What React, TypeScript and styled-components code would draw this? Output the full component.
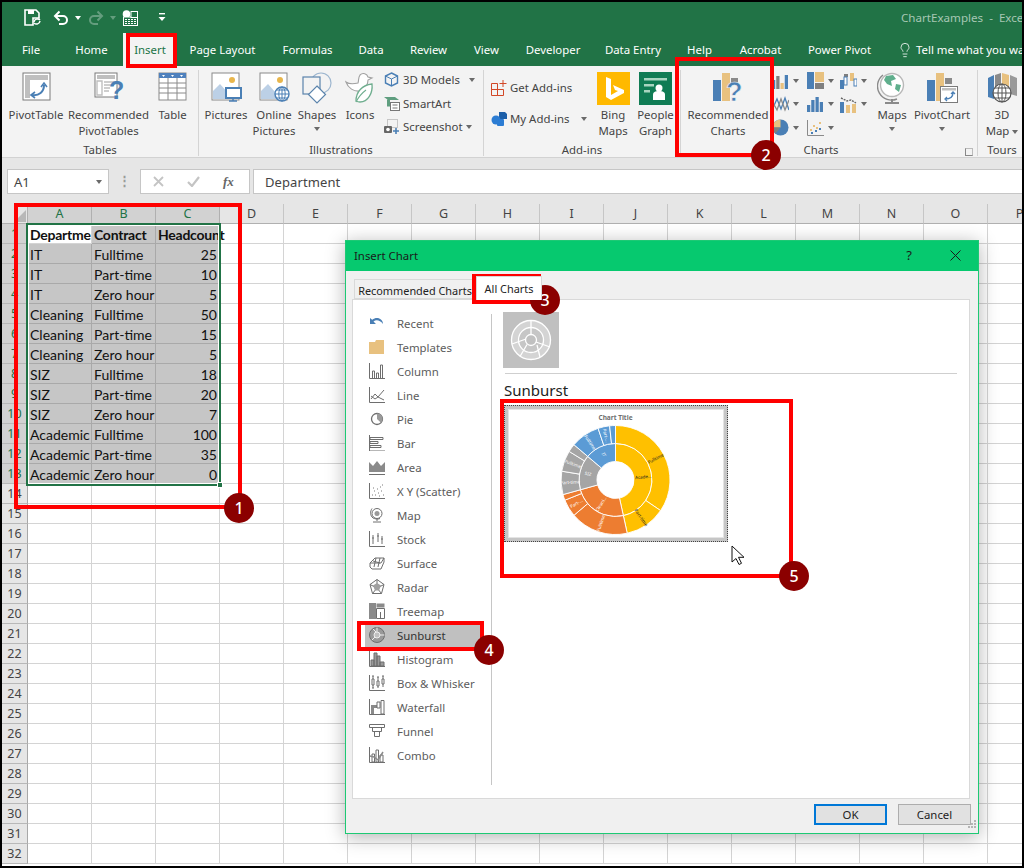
import { Fragment, ReactNode } from 'react';
import styled, { createGlobalStyle } from 'styled-components';
import { Lightbulb } from 'lucide-react';

const UI_FONT = '"Noto Sans", "Open Sans", sans-serif';
const BLUE = '#4a7fb5';
const TAN = '#e8c17f';

const GlobalStyle = createGlobalStyle`
  html, body { margin: 0; padding: 0; background: #000; }
  * { box-sizing: border-box; }
`;

const Screen = styled.div`
  position: relative;
  width: 1024px;
  height: 868px;
  padding: 2px;
  background: #000;
  font-family: ${UI_FONT};
  font-size: 11.4px;
  color: #444;
  overflow: hidden;
`;

const Window = styled.div`
  width: 1020px;
  height: 864px;
  background: #fff;
  overflow: hidden;
  display: flex;
  flex-direction: column;
`;

const TitleBar = styled.div`
  flex: 0 0 31px;
  background: #217346;
  display: flex;
  align-items: center;
  padding-left: 22px;
`;

const QuickIcon = styled.div<{ $w: number }>`
  width: ${p => p.$w}px;
  height: 20px;
  display: flex;
  align-items: center;
`;

const DocTitle = styled.div`
  margin-left: auto;
  white-space: pre;
  font-size: 11.6px;
  color: #a6c7b4;
  width: 121px;
  overflow: hidden;
`;

const TabRow = styled.div`
  flex: 0 0 33px;
  background: #217346;
  display: flex;
  align-items: stretch;
  padding-left: 2px;
`;

const Tab = styled.div<{ $w: number; $active?: boolean }>`
  flex: 0 0 ${p => p.$w}px;
  display: flex;
  align-items: center;
  justify-content: center;
  color: ${p => (p.$active ? '#217346' : '#fff')};
  background: ${p => (p.$active ? '#f3f3f3' : 'transparent')};
  box-shadow: ${p => (p.$active ? '-2px 0 0 #f3f3f3' : 'none')};
  white-space: nowrap;
`;

const TellMe = styled.div`
  display: flex;
  align-items: center;
  gap: 3px;
  color: #fff;
  white-space: nowrap;
  padding-left: 13px;
`;

const Ribbon = styled.div`
  flex: 0 0 92px;
  background: #f3f3f3;
  border-bottom: 1px solid #d2d2d2;
  display: flex;
  padding-top: 4px;
`;

const Group = styled.div<{ $w: number }>`
  flex: 0 0 ${p => p.$w}px;
  height: 86px;
  border-right: 1px solid #d4d4d4;
  display: flex;
  flex-direction: column;
`;

const GroupBody = styled.div`
  height: 73px;
  display: flex;
`;

const GroupLabel = styled.div<{ $pr?: number }>`
  height: 13px;
  line-height: 13px;
  text-align: center;
  padding-right: ${p => p.$pr ?? 0}px;
  position: relative;
  color: #444;
`;

const Launcher = styled.div`
  position: absolute;
  right: 4px;
  top: 5px;
  width: 8px;
  height: 8px;
  border-left: 1px solid #888;
  border-bottom: 1px solid #888;
  border-top: 1px solid #bbb;
  border-right: 1px solid #bbb;
`;

const BigButton = styled.div<{ $w: number }>`
  flex: 0 0 ${p => p.$w}px;
  min-width: 0;
  display: flex;
  flex-direction: column;
  align-items: center;
`;

const BigIcon = styled.div`
  height: 37px;
  display: flex;
  align-items: flex-start;
  padding-top: 2px;
`;

const BigLabel = styled.div`
  line-height: 16px;
  text-align: center;
  white-space: pre;
  color: #444;
`;

const Caret = styled.span<{ $dim?: boolean; $light?: boolean }>`
  display: inline-block;
  width: 0;
  height: 0;
  vertical-align: middle;
  border-left: 3.5px solid transparent;
  border-right: 3.5px solid transparent;
  border-top: 4px solid ${p => (p.$light ? '#fff' : '#6a6a6a')};
  opacity: ${p => (p.$dim ? 0.3 : 1)};
`;

const BigCaret = styled.div`
  line-height: 10px;
  height: 12px;
`;

const SmallColumn = styled.div<{ $w: number; $top: number; $left: number }>`
  flex: 0 0 ${p => p.$w}px;
  min-width: 0;
  margin-top: ${p => p.$top}px;
  padding-left: ${p => p.$left}px;
  display: flex;
  flex-direction: column;
`;

const SmallRow = styled.div<{ $h: number }>`
  height: ${p => p.$h}px;
  display: flex;
  align-items: center;
  white-space: nowrap;
  color: #444;
`;

const SmallIcon = styled.div`
  width: 19px;
  height: 18px;
  display: flex;
  align-items: center;
`;

const ChartGrid = styled.div`
  flex: 0 0 100px;
  margin: -1px 0 0 -3px;
  display: grid;
  grid-template-columns: 35px 33px 32px;
  grid-auto-rows: 23.5px;
  align-items: center;
`;

const ChartPick = styled.div`
  display: flex;
  align-items: center;
  gap: 4px;
`;

const FormulaRow = styled.div`
  flex: 0 0 46px;
  background: #e6e6e6;
  display: flex;
  align-items: flex-start;
  padding-top: 11px;
  padding-left: 5px;
`;

const NameBox = styled.div`
  width: 102px;
  height: 25px;
  background: #fff;
  border: 1px solid #c6c6c6;
  display: flex;
  align-items: center;
  justify-content: space-between;
  padding: 0 6px;
  font-size: 13px;
`;

const Dots = styled.div`
  width: 31px;
  text-align: center;
  color: #9a9a9a;
  line-height: 22px;
  font-size: 13px;
  font-weight: 700;
`;

const FxBox = styled.div`
  width: 110px;
  height: 25px;
  background: #fff;
  border: 1px solid #c6c6c6;
  display: flex;
  align-items: center;
  padding-left: 12px;
  gap: 23px;
`;

const FxMark = styled.span`
  font-family: "Liberation Serif", serif;
  font-style: italic;
  font-weight: 700;
  font-size: 13px;
  color: #666;
`;

const FormulaInput = styled.div`
  flex: 1;
  height: 25px;
  margin-left: 3px;
  background: #fff;
  border: 1px solid #c6c6c6;
  border-right: 0;
  display: flex;
  align-items: center;
  padding-left: 11px;
  font-size: 13px;
  letter-spacing: 0.1px;
`;

const Sheet = styled.div`
  display: grid;
  grid-template-columns: 26px repeat(16, 64px);
  grid-auto-rows: 20px;
  background: #fff;
`;

const Corner = styled.div`
  background: #e6e6e6;
  border-right: 1px solid #b0b0b0;
  border-bottom: 1px solid #b0b0b0;
  position: relative;
  overflow: hidden;
  &::after {
    content: '';
    position: absolute;
    right: 1px;
    bottom: 1px;
    border-left: 12px solid transparent;
    border-bottom: 12px solid #b8b8b8;
  }
`;

const ColHead = styled.div<{ $on?: boolean }>`
  background: ${p => (p.$on ? '#d2d2d2' : '#e6e6e6')};
  color: ${p => (p.$on ? '#217346' : '#444')};
  border-right: 1px solid ${p => (p.$on ? '#b0b0b0' : '#c6c6c6')};
  border-bottom: 1px solid #b0b0b0;
  text-align: center;
  line-height: 19px;
  font-size: 12.5px;
`;

const RowHead = styled.div<{ $on?: boolean }>`
  background: ${p => (p.$on ? '#d2d2d2' : '#e6e6e6')};
  color: ${p => (p.$on ? '#217346' : '#444')};
  border-right: 1px solid #a8a8a8;
  border-bottom: 1px solid #b8b8b8;
  text-align: center;
  line-height: 20px;
  font-size: 12.5px;
`;

const Cell = styled.div<{ $on?: boolean; $right?: boolean; $bold?: boolean; $spill?: boolean }>`
  background: ${p => (p.$on ? '#c6c6c6' : 'transparent')};
  border-right: 1px solid ${p => (p.$on ? '#a9a9a9' : '#d4d4d4')};
  border-bottom: 1px solid ${p => (p.$on ? '#a9a9a9' : '#d4d4d4')};
  font-family: Lato, "Liberation Sans", sans-serif;
  font-size: 14px;
  font-weight: ${p => (p.$bold ? 700 : 400)};
  letter-spacing: ${p => (p.$bold ? '-0.25px' : '0')};
  color: #111;
  line-height: 21px;
  padding: 0 2px;
  white-space: nowrap;
  text-align: ${p => (p.$right ? 'right' : 'left')};
  overflow: ${p => (p.$spill ? 'visible' : 'hidden')};
`;

const SelectionBox = styled.div`
  position: absolute;
  left: 26px;
  top: 223px;
  width: 195px;
  height: 263px;
  border: 2px solid #217346;
  box-shadow: inset 0 0 0 1px #fff;
`;

const FillHandle = styled.div`
  position: absolute;
  left: 217px;
  top: 482px;
  width: 6px;
  height: 6px;
  background: #217346;
  border: 1px solid #fff;
`;

const Dialog = styled.div`
  position: absolute;
  left: 345px;
  top: 240px;
  width: 634px;
  height: 594px;
  background: #f0f0f0;
  border: 1px solid #1dc974;
  box-shadow: 0 3px 18px rgba(0, 0, 0, 0.3);
  display: flex;
  flex-direction: column;
`;

const DialogTitle = styled.div`
  flex: 0 0 30px;
  background: #06c96f;
  display: flex;
  align-items: center;
  padding: 0 0 2px 8px;
  color: #1a1a1a;
`;

const DialogTitleText = styled.span`
  flex: 1;
`;

const TitleGlyph = styled.span`
  width: 46px;
  text-align: center;
  font-size: 13px;
  display: flex;
  justify-content: center;
`;

const DialogTabs = styled.div`
  flex: 0 0 28px;
  display: flex;
  align-items: flex-end;
  padding-left: 8px;
`;

const DialogTab = styled.div<{ $active?: boolean; $w: number }>`
  width: ${p => p.$w}px;
  height: ${p => (p.$active ? 24 : 20)}px;
  margin-bottom: ${p => (p.$active ? -1 : 0)}px;
  background: ${p => (p.$active ? '#fff' : '#f0f0f0')};
  border: 1px solid #d9d9d9;
  border-bottom: ${p => (p.$active ? '0' : '1px solid #d9d9d9')};
  z-index: ${p => (p.$active ? 1 : 0)};
  text-align: center;
  line-height: ${p => (p.$active ? 24 : 21)}px;
  color: #222;
  font-size: 10.9px;
  white-space: nowrap;
  overflow: hidden;
`;

const Panel = styled.div`
  flex: 0 0 500px;
  margin: 0 8px 0 6px;
  background: #fff;
  border: 1px solid #d9d9d9;
  display: flex;
`;

const TypeList = styled.div`
  flex: 0 0 139px;
  margin-top: 14px;
  height: 471px;
  border-right: 1px solid #c6c6c6;
  padding-left: 12px;
`;

const TypeStack = styled.div`
  margin-top: -3px;
`;

const TypeItem = styled.div<{ $on?: boolean }>`
  width: 115px;
  height: 24px;
  padding-left: 4px;
  display: flex;
  align-items: center;
  gap: 12px;
  background: ${p => (p.$on ? '#c0c0c0' : 'transparent')};
  color: ${p => (p.$on ? '#333' : '#5c5c5c')};
  white-space: nowrap;
`;

const Gallery = styled.div`
  flex: 1;
  padding: 12px 0 0 11px;
`;

const Thumb = styled.div`
  width: 56px;
  height: 56px;
  background: #c0c0c0;
`;

const Rule = styled.div`
  width: 452px;
  height: 1px;
  margin: 5px 0 0 2px;
  background: #cfcfcf;
`;

const GalleryTitle = styled.div`
  height: 31px;
  line-height: 33px;
  margin-left: 1px;
  font-size: 15px;
  color: #222;
`;

const Preview = styled.div`
  width: 224px;
  height: 137px;
  margin-left: 1px;
  border: 1px dotted #444;
  background: #c6c6c6;
  padding: 3px;
`;

const PreviewPaper = styled.div`
  width: 100%;
  height: 100%;
  background: #fff;
  border: 1px solid #e4e4e4;
  overflow: hidden;
`;

const DialogFooter = styled.div`
  flex: 1;
  display: flex;
  justify-content: flex-end;
  gap: 11px;
  padding: 5px 7px 0 0;
  position: relative;
`;

const DialogButton = styled.div<{ $primary?: boolean }>`
  width: 73px;
  height: 21px;
  background: #e1e1e1;
  border: ${p => (p.$primary ? '2px solid #0078d7' : '1px solid #adadad')};
  display: flex;
  align-items: center;
  justify-content: center;
  color: #222;
`;

const Grip = styled.div`
  position: absolute;
  right: 1px;
  bottom: 1px;
`;

const RedBox = styled.div<{ $x: number; $y: number; $w: number; $h: number }>`
  position: absolute;
  left: ${p => p.$x}px;
  top: ${p => p.$y}px;
  width: ${p => p.$w}px;
  height: ${p => p.$h}px;
  border: 4px solid #ff0000;
  pointer-events: none;
`;

const Badge = styled.div<{ $x: number; $y: number }>`
  position: absolute;
  left: ${p => p.$x - 15}px;
  top: ${p => p.$y - 15}px;
  width: 30px;
  height: 30px;
  border-radius: 50%;
  background: #8b0000;
  color: #fff;
  display: flex;
  align-items: center;
  justify-content: center;
  font-size: 16px;
  font-weight: 500;
`;

const Pointer = styled.svg`
  position: absolute;
  left: 731px;
  top: 545px;
`;

// ---- ribbon and toolbar drawings ----

const SaveIcon = () => (
  <svg width="18" height="17" viewBox="0 0 18 17" fill="none">
    <path d="M1 1h11l3 3v5H9v7H1z" fill="#217346" stroke="#fff" strokeWidth="1.6" />
    <rect x="4" y="1" width="6" height="4" fill="#fff" />
    <path d="M10 13a3.5 3.5 0 0 1 6-2M16 12a3.5 3.5 0 0 1-6 2" stroke="#fff" strokeWidth="1.5" />
  </svg>
);

const UndoIcon = ({ dim }: { dim?: boolean }) => (
  <svg width="16" height="15" viewBox="0 0 16 15" fill="none" style={dim ? { transform: 'scaleX(-1)', opacity: 0.3 } : undefined}>
    <path d="M3 6h7a4 4 0 0 1 0 8H6" stroke="#fff" strokeWidth="2" />
    <path d="M6.5 1.5 2 6l4.5 4.5" stroke="#fff" strokeWidth="2" />
  </svg>
);

const FormIcon = () => (
  <svg width="17" height="16" viewBox="0 0 17 16" fill="none">
    <circle cx="4.5" cy="4" r="3.8" fill="#fff" />
    <rect x="1.5" y="7" width="14" height="8.5" fill="#217346" stroke="#fff" />
    <rect x="9" y="1.5" width="6.5" height="6" fill="#217346" stroke="#fff" />
    <path d="M3 9.5h11M3 11.5h11M3 13.5h11" stroke="#fff" strokeDasharray="2 1" />
  </svg>
);

const CustomizeIcon = () => (
  <svg width="8" height="9" viewBox="0 0 8 9" fill="#fff">
    <rect x="1" y="0" width="6" height="1.4" />
    <path d="M0.5 4h7L4 8z" />
  </svg>
);

const PivotTableIcon = () => (
  <svg width="29" height="29" viewBox="0 0 29 29" fill="none">
    <rect x="1" y="1" width="27" height="27" fill="#fff" stroke="#7a7a7a" />
    <rect x="3" y="3" width="23" height="5" fill="#bfbfbf" />
    <rect x="3" y="8" width="5" height="18" fill="#bfbfbf" />
    <path d="M10 23c7 1 12-3 12-10" stroke={BLUE} strokeWidth="2" />
    <path d="M19 15l3-4 3 4M13 20l-4 3 4 3" stroke={BLUE} strokeWidth="1.6" />
  </svg>
);

const RecPivotIcon = () => (
  <svg width="30" height="31" viewBox="0 0 30 31" fill="none">
    <rect x="1" y="1" width="22" height="24" fill="#fff" stroke="#7a7a7a" />
    <rect x="3" y="3" width="18" height="4" fill="#bfbfbf" />
    <path d="M3 9h5v14H3zM10 10h10M10 13h10M10 16h6M10 19h5" stroke="#bfbfbf" strokeWidth="1.4" />
    <text x="15" y="27" fontFamily="Liberation Sans, sans-serif" fontSize="25" fontWeight="700" fill={BLUE}>?</text>
  </svg>
);

const TableIcon = () => (
  <svg width="29" height="29" viewBox="0 0 29 29" fill="none">
    <rect x="1" y="1" width="27" height="27" fill="#fff" stroke="#8a8a8a" />
    <rect x="1" y="1" width="27" height="5" fill="#4f81bd" />
    <path d="M1 11h27M1 16h27M1 21h27M10 6v22M19 6v22" stroke="#8a8a8a" />
    <path d="M4 3h3l-1.500 2zM13 3h3l-1.500 2zM22 3h3l-1.500 2z" fill="#fff" />
  </svg>
);

const PictureBase = () => (
  <>
    <rect x="1" y="1" width="27" height="27" fill="#fff" stroke="#8a8a8a" />
    <circle cx="21" cy="8" r="3" fill="#e8b64c" />
    <path d="M2 27V19l7-7 8 9v6z" fill="#bcd0e6" />
  </>
);

const PicturesIcon = () => (
  <svg width="31" height="30" viewBox="0 0 31 30" fill="none">
    <PictureBase />
    <rect x="15" y="16" width="15" height="10" fill="#fff" stroke={BLUE} strokeWidth="2" />
    <path d="M22 26v3M18 29h8" stroke={BLUE} strokeWidth="1.5" />
  </svg>
);

const OnlinePicturesIcon = () => (
  <svg width="31" height="30" viewBox="0 0 31 30" fill="none">
    <PictureBase />
    <circle cx="23" cy="22" r="7" fill="#fff" stroke={BLUE} strokeWidth="1.4" />
    <path d="M16 22h14M23 15v14M18 18h10M18 26h10" stroke={BLUE} />
    <ellipse cx="23" cy="22" rx="3.2" ry="7" stroke={BLUE} />
  </svg>
);

const ShapesIcon = () => (
  <svg width="32" height="32" viewBox="0 0 32 32" fill="none" stroke="#5b84ac" strokeWidth="1.2">
    <circle cx="20" cy="11" r="10" fill="#f3f3f3" stroke="#9db6cf" />
    <rect x="2" y="5" width="17" height="17" fill="#f3f3f3" />
    <path d="M16 14l8.500 8.500L16 31l-8.500-8.500z" fill="#fff" />
  </svg>
);

const IconsIcon = () => (
  <svg width="30" height="32" viewBox="0 0 30 32" fill="none" stroke="#a0a0a0" strokeWidth="1.1">
    <path d="M1 10c4 3 8 2 12 1 1-3 0-5 2-8 3-3 7-1 8 2l4 1-4 2c0 5-3 9-8 11-6 1-12-3-14-9z" fill="#fff" />
    <path d="M11 29c0-9 6-16 16-17 1 9-4 18-12 18-2 0-3-0.500-4-1z" fill="#fff" stroke="#6fae8f" strokeWidth="1.3" />
    <path d="M11 30c3-6 6-9 10-12" stroke="#6fae8f" />
  </svg>
);

const ModelsIcon = () => (
  <svg width="15" height="15" viewBox="0 0 15 15" fill="none" stroke={BLUE} strokeWidth="1.4">
    <path d="M7.500 1l6 3v7l-6 3-6-3V4z" />
    <path d="M1.500 4l6 3 6-3M7.500 7v7" strokeWidth="1" />
  </svg>
);

const SmartArtIcon = () => (
  <svg width="16" height="15" viewBox="0 0 16 15" fill="none">
    <path d="M0 1h11l4 3H4z" fill="#5f9e7f" />
    <rect x="3" y="3.500" width="3" height="7" fill="#5f9e7f" />
    <rect x="6.500" y="6.500" width="9" height="8" fill="#fff" stroke="#777" />
    <path d="M8.500 9h5M8.500 12h5" stroke="#777" />
  </svg>
);

const ScreenshotIcon = () => (
  <svg width="16" height="15" viewBox="0 0 16 15" fill="none">
    <rect x="3.500" y="0.500" width="10" height="8" stroke="#999" strokeDasharray="1 1" />
    <rect x="0" y="7" width="8" height="7" rx="1" fill="#666" />
    <circle cx="4" cy="10.500" r="1.800" fill="#fff" />
    <path d="M12 9v6M9 12h6" stroke={BLUE} strokeWidth="1.6" />
  </svg>
);

const GetAddinsIcon = () => (
  <svg width="16" height="16" viewBox="0 0 16 16" fill="none" stroke="#d24726">
    <path d="M0.500 3.500h6v6h-6zM0.500 9.500h6v6h-6zM6.500 9.500h6v6h-6z" />
    <path d="M12 0v7M8.500 3.500h7" />
  </svg>
);

const MyAddinsIcon = () => (
  <svg width="16" height="16" viewBox="0 0 16 16" fill="#2b7cd3">
    <path d="M8 1h6l2 2v5H8z" fill="#1d5fa8" />
    <circle cx="5" cy="9" r="4.500" />
    <rect x="6" y="8" width="7" height="7" rx="1" />
  </svg>
);

const BingIcon = () => (
  <svg width="33" height="33" viewBox="0 0 33 33">
    <rect width="33" height="33" fill="#ffb900" />
    <path d="M9 5l5 2v16l7-4-3-1-2-5 11 5v3l-13 7-5-3z" fill="#fff" />
  </svg>
);

const PeopleIcon = () => (
  <svg width="33" height="33" viewBox="0 0 33 33">
    <rect width="33" height="33" fill="#107c54" />
    <path d="M5 6h23v2.500H5zM5 12h10v2.500H5zM5 18h6v2.500H5z" fill="#a8d5c0" />
    <circle cx="20" cy="16" r="3.500" fill="#fff" />
    <path d="M14 28v-5c0-3 2-4 6-4s6 1 6 4v5z" fill="#fff" />
  </svg>
);

const RecChartsIcon = () => (
  <svg width="32" height="30" viewBox="0 0 32 30">
    <rect x="1" y="8" width="8" height="21" fill={BLUE} />
    <rect x="10" y="1" width="8" height="28" fill={TAN} />
    <rect x="19" y="6" width="7" height="5" fill="#8a8a8a" />
    <text x="14" y="29" fontFamily="Liberation Sans, sans-serif" fontSize="27" fontWeight="700" fill={BLUE} stroke="#f3f3f3" strokeWidth="0.6">?</text>
  </svg>
);

const MiniBars = ({ colors, heights }: { colors: string[]; heights: number[] }) => (
  <svg width="17" height="16" viewBox="0 0 17 16">
    {heights.map((h, i) => (
      <rect key={i} x={i * (17 / heights.length)} y={16 - h} width={17 / heights.length - 1} height={h} fill={colors[i % colors.length]} />
    ))}
  </svg>
);

const HierarchyIcon = () => (
  <svg width="17" height="17" viewBox="0 0 17 17">
    <rect x="0" y="0" width="7" height="17" fill={BLUE} />
    <rect x="8" y="0" width="9" height="10" fill={TAN} />
    <rect x="8" y="11" width="9" height="6" fill="#7f7f7f" />
  </svg>
);

const StepIcon = () => (
  <svg width="17" height="17" viewBox="0 0 17 17">
    <rect x="0" y="8" width="4" height="9" fill={BLUE} />
    <rect x="4" y="2" width="4" height="3" fill="#7f7f7f" />
    <rect x="4" y="5" width="3" height="8" fill="#fff" stroke={BLUE} />
    <rect x="10" y="1" width="4" height="8" fill={TAN} />
    <rect x="14" y="7" width="3" height="7" fill="#fff" stroke={BLUE} />
  </svg>
);

const LineMiniIcon = () => (
  <svg width="17" height="16" viewBox="0 0 17 16" fill="none" strokeWidth="1.3">
    <path d="M0 14 5 3l4 10 4-11 4 12" stroke={BLUE} />
    <path d="M0 5l5 9 4-11 4 11 4-10" stroke="#8a8a8a" />
  </svg>
);

const PieMiniIcon = () => (
  <svg width="17" height="17" viewBox="0 0 17 17">
    <circle cx="8.500" cy="8.500" r="8" fill={BLUE} />
    <path d="M8.500 8.500V0.500a8 8 0 0 0-8 8z" fill={TAN} />
    <path d="M8.500 8.500H0.500a8 8 0 0 0 3 6z" fill="#7f7f7f" />
  </svg>
);

const ComboMiniIcon = () => (
  <svg width="17" height="17" viewBox="0 0 17 17" fill="none">
    <rect x="0" y="6" width="4" height="11" fill={BLUE} />
    <rect x="6" y="9" width="4" height="8" fill={TAN} />
    <rect x="12" y="8" width="4" height="9" fill={TAN} />
    <path d="M1 2l6 3 4-1 5 3" stroke="#666" strokeDasharray="2 1" strokeWidth="1.400" />
  </svg>
);

const ScatterMiniIcon = () => (
  <svg width="17" height="17" viewBox="0 0 17 17" fill="none">
    <path d="M0.500 1v15.500H17" stroke="#8a8a8a" />
    <path d="M3 11h2M6 7h2M9 9h2M12 4h2" stroke={TAN} strokeWidth="2" />
    <path d="M4 14h2M8 12h2M12 10h2" stroke={BLUE} strokeWidth="2" />
  </svg>
);

const GlobeIcon = () => (
  <svg width="30" height="33" viewBox="0 0 30 33" fill="none">
    <circle cx="15" cy="13" r="11.500" fill="#fff" stroke="#b8b8b8" strokeWidth="1.4" />
    <path d="M9 4l7-1 3 4-5 2 1 5-5-2-3-4zM19 12l5 1-2 7-4-3z" fill="#5fae8c" />
    <path d="M6 3a14 14 0 0 0 14 24" stroke="#8a8a8a" strokeWidth="1.4" />
    <path d="M15 27v3M8 31h14" stroke="#8a8a8a" strokeWidth="2" />
  </svg>
);

const PivotChartIcon = () => (
  <svg width="32" height="31" viewBox="0 0 32 31">
    <rect x="1" y="8" width="8" height="21" fill={BLUE} />
    <rect x="10" y="1" width="8" height="28" fill={TAN} />
    <rect x="19" y="6" width="7" height="6" fill="#8a8a8a" />
    <rect x="14.500" y="14.500" width="17" height="16" fill="#fff" stroke="#7a7a7a" />
    <rect x="16" y="16" width="14" height="2.500" fill="#bfbfbf" />
    <path d="M19 27c5 0 8-2 8-6M25 22l2-2 2 2M21 25l-2 2 2 2" stroke={BLUE} strokeWidth="1.300" fill="none" />
  </svg>
);

const ThreeDMapIcon = () => (
  <svg width="31" height="31" viewBox="0 0 31 31" fill="none">
    <path d="M1 6l6-3v24l-6-2z" fill={BLUE} />
    <path d="M8 3l6-2v22l-6 3z" fill="#8a8a8a" />
    <path d="M15 1l7 2v20l-7-1z" fill={TAN} />
    <path d="M23 3l7 3v18l-7-2z" fill="#9a9a9a" />
    <circle cx="15" cy="21" r="9" fill="#fff" stroke="#555" strokeWidth="1.200" />
    <path d="M6 21h18M15 12v18M8 16h14M8 26h14" stroke="#555" />
    <ellipse cx="15" cy="21" rx="4" ry="9" stroke="#555" />
  </svg>
);

const FormulaCancel = () => (
  <svg width="11" height="11" viewBox="0 0 11 11" fill="none" stroke="#c4c4c4" strokeWidth="1.800">
    <path d="M1 1l9 9M10 1l-9 9" />
  </svg>
);

const FormulaOk = () => (
  <svg width="13" height="11" viewBox="0 0 13 11" fill="none" stroke="#c4c4c4" strokeWidth="2.200">
    <path d="M1 6l4 4 7-9" />
  </svg>
);

// ---- chart type list drawings ----

const ICON_STROKE = { fill: 'none', stroke: '#6e6e6e', strokeWidth: 1 };

const Axes = () => <path d="M0.500 0v15.500H16" {...ICON_STROKE} />;

const typeIcons: Record<string, ReactNode> = {
  Recent: (
    <path d="M1 3v6h6L4.500 6.500C7 4.500 11 5 14 9c0-5-6-8-10.800-4.200z" fill={BLUE} />
  ),
  Templates: <path d="M0 3h6l1-2h8v14H0z" fill={TAN} />,
  Column: (
    <>
      <Axes />
      <path d="M3.500 15V8h2v7M7.500 15V10h2v5M11.500 15V2h2v13" {...ICON_STROKE} />
    </>
  ),
  Line: (
    <>
      <Axes />
      <path d="M2 12l4-5 3 3 6-7M2 9l4 3 3-2 6 3" {...ICON_STROKE} />
    </>
  ),
  Pie: (
    <>
      <circle cx="8" cy="8" r="5.500" {...ICON_STROKE} strokeWidth={1.300} />
      <path d="M8 8V2.500a5.500 5.500 0 0 1 4 9.300z" fill="#9a9a9a" />
    </>
  ),
  Bar: (
    <>
      <path d="M0.500 0v16H16" {...ICON_STROKE} />
      <path d="M1 2.500h13v2H1zM1 6.500h8v2H1zM1 10.500h11v2H1z" {...ICON_STROKE} />
    </>
  ),
  Area: (
    <>
      <path d="M0 13V3l4 4 4-5 4 5 4-4v10z" fill="#8a8a8a" />
      <path d="M0 15.500h16" {...ICON_STROKE} />
    </>
  ),
  'X Y (Scatter)': (
    <>
      <Axes />
      <path d="M3 12h1M5 8h1M6 12h1M8 6h1M9 10h1M11 4h1M12 8h1M13 2h1M14 12h1M4 5h1M10 13h1" stroke="#7a7a7a" />
    </>
  ),
  Map: (
    <>
      <circle cx="8" cy="6.500" r="5" {...ICON_STROKE} />
      <circle cx="8" cy="6.500" r="2.500" fill="#9a9a9a" />
      <path d="M3 1.500c-2 3-2 7 1 9.500 2 1 5 1.500 7 .5M8 12v2M4 15h8" {...ICON_STROKE} />
    </>
  ),
  Stock: (
    <>
      <Axes />
      <path d="M4 4v9M3 7h2M9 2v9M8 5h2M13 5v8M12 8h2" {...ICON_STROKE} />
    </>
  ),
  Surface: (
    <path d="M1 8l5-5h9v4l-3 7H3l-2-2zM4 6l7 2M7 3l-2 9M11 3l-2 9M1 8h11l3-5" {...ICON_STROKE} />
  ),
  Radar: (
    <>
      <path d="M8 0.500l7 5-2.500 9h-9l-2.500-9z" {...ICON_STROKE} />
      <path d="M8 0.500V9M15 5.500L8 9M12.500 14.500L8 9M3.500 14.500L8 9M1 5.500L8 9" {...ICON_STROKE} />
      <path d="M8 4l4 2.500-2 5H6l-2-5z" fill="#a0a0a0" />
    </>
  ),
  Treemap: (
    <>
      <rect x="0" y="0" width="7" height="16" fill="#8a8a8a" />
      <rect x="7.500" y="0.500" width="8" height="4" fill="#8a8a8a" />
      <path d="M7.500 5.500h8v10h-8zM11.500 9v6" {...ICON_STROKE} />
    </>
  ),
  Sunburst: (
    <>
      <circle cx="8" cy="8" r="7.500" fill="#9a9a9a" stroke="#6e6e6e" />
      <circle cx="8" cy="8" r="3" fill="#c0c0c0" stroke="#eee" />
      <path d="M8 0.500V5M3 13l3-3M11 8h4.500M4 2l3 3" stroke="#eee" />
    </>
  ),
  Histogram: (
    <>
      <Axes />
      <path d="M2 15V9h3v6zM5 15V2h3v13zM8 15V5h3v10zM11 15v-4h4v4z" fill="#9a9a9a" stroke="#6e6e6e" />
    </>
  ),
  'Box & Whisker': (
    <>
      <Axes />
      <path d="M3 1h2M4 1v3M3 4h2v6H3zM4 10v3M3 13h2M8 2h2M9 2v4M8 6h2v5H8zM9 11v2M13 1h2M14 1v3M13 4h2v5h-2zM14 9v3" {...ICON_STROKE} />
    </>
  ),
  Waterfall: (
    <>
      <Axes />
      <path d="M2 15V6h3v9zM5 6h3v3H5z" fill="#8a8a8a" />
      <path d="M8 9V3h3v6zM12 1.500h3V15h-3z" {...ICON_STROKE} />
    </>
  ),
  Funnel: (
    <path d="M0.500 1.500h15v3h-15zM3.500 4.500h9v4h-9zM5.500 8.500h5v5h-5z" {...ICON_STROKE} />
  ),
  Combo: (
    <>
      <Axes />
      <path d="M3 15V7h2.500v8zM7 15V3h2.500v12zM11 15V8h3v7z" {...ICON_STROKE} />
      <path d="M1 9l4 1 4 3 5-8" stroke="#8a8a8a" strokeWidth="1.500" fill="none" />
    </>
  ),
};

const chartTypes = Object.keys(typeIcons);

// ---- sunburst preview, drawn from the sheet data ----

const CX = 106.5;
const CY = 70;

const polar = (angle: number, r: number): [number, number] => {
  const a = ((angle - 90) * Math.PI) / 180;
  return [CX + r * Math.cos(a), CY + r * Math.sin(a)];
};

const arcPath = (from: number, to: number, r0: number, r1: number) => {
  const [ax, ay] = polar(from, r1);
  const [bx, by] = polar(to, r1);
  const [cx, cy] = polar(to, r0);
  const [dx, dy] = polar(from, r0);
  const large = to - from > 180 ? 1 : 0;
  return `M${ax} ${ay}A${r1} ${r1} 0 ${large} 1 ${bx} ${by}L${cx} ${cy}A${r0} ${r0} 0 ${large} 0 ${dx} ${dy}Z`;
};

const sunData = [
  { name: 'Acade...', color: '#ffc000', ink: '#222', parts: [100, 35], labels: ['Fulltime', 'Part-time'] },
  { name: 'Cleani...', color: '#ed7d31', ink: '#fff', parts: [50, 15, 5], labels: ['Fulltime', 'Part-...', ''] },
  { name: 'SIZ', color: '#a5a5a5', ink: '#fff', parts: [20, 18, 7], labels: ['Part-time', 'Fulltime', ''] },
  { name: 'IT', color: '#5b9bd5', ink: '#fff', parts: [25, 10, 5], labels: ['Fulltime', 'Part-...', ''] },
];

const Sunburst = () => {
  const total = sunData.reduce((s, g) => s + g.parts.reduce((a, b) => a + b, 0), 0);
  const deg = 360 / total;
  let at = 0;
  return (
    <svg width="214" height="127" viewBox="0 0 214 127">
      <text x={CX} y="10" textAnchor="middle" fontFamily={UI_FONT} fontSize="6.500" fontWeight="700" fill="#6e6e6e">Chart Title</text>
      {sunData.map(group => {
        const start = at;
        const sum = group.parts.reduce((a, b) => a + b, 0);
        const mid = start + (sum * deg) / 2;
        const [nx, ny] = polar(mid, 28);
        const flipName = mid > 180;
        return (
          <Fragment key={group.name}>
            <path d={arcPath(start, start + sum * deg, 18.500, 36.500)} fill={group.color} stroke="#fff" strokeWidth="0.900" />
            {group.parts.map((part, i) => {
              const from = at;
              at += part * deg;
              const m = from + (part * deg) / 2;
              const [lx, ly] = polar(m, 45.500);
              const flip = m > 180;
              return (
                <Fragment key={i}>
                  <path d={arcPath(from, at, 36.500, 54.500)} fill={group.color} stroke="#fff" strokeWidth="0.900" />
                  {group.labels[i] && (
                    <text
                      x={lx}
                      y={ly + 1.500}
                      textAnchor="middle"
                      fontFamily={UI_FONT}
                      fontSize="4.500"
                      fill={group.ink}
                      transform={`rotate(${flip ? m + 90 : m - 90} ${lx} ${ly})`}
                    >
                      {group.labels[i]}
                    </text>
                  )}
                </Fragment>
              );
            })}
            <text
              x={nx}
              y={ny + 1.500}
              textAnchor="middle"
              fontFamily={UI_FONT}
              fontSize="4.500"
              fill={group.ink}
              transform={`rotate(${flipName ? mid + 90 : mid - 90} ${nx} ${ny})`}
            >
              {group.name}
            </text>
          </Fragment>
        );
      })}
    </svg>
  );
};

const SunburstThumb = () => (
  <svg width="56" height="56" viewBox="0 0 56 56" fill="none" stroke="#fff" strokeWidth="1.300">
    <circle cx="28" cy="28" r="19.500" fill="#d4d4d4" />
    <circle cx="28" cy="28" r="12.500" fill="#c6c6c6" />
    <circle cx="28" cy="28" r="5.500" fill="#c0c0c0" />
    <path d="M28 8.500v14M33 30l14 5M24 32.500l-7 12M23 27L9 32M34 33l3 12" />
  </svg>
);

// ---- data ----

const tabs: [string, number, boolean?][] = [
  ['File', 54],
  ['Home', 67],
  ['Insert', 50, true],
  ['Page Layout', 95],
  ['Formulas', 75],
  ['Data', 52],
  ['Review', 63],
  ['View', 53],
  ['Developer', 80],
  ['Data Entry', 80],
  ['Help', 53],
  ['Acrobat', 69],
  ['Power Pivot', 89],
];

const columns = 'ABCDEFGHIJKLMNOP'.split('');

const rows: [string, string, number][] = [
  ['IT', 'Fulltime', 25],
  ['IT', 'Part-time', 10],
  ['IT', 'Zero hour', 5],
  ['Cleaning', 'Fulltime', 50],
  ['Cleaning', 'Part-time', 15],
  ['Cleaning', 'Zero hour', 5],
  ['SIZ', 'Fulltime', 18],
  ['SIZ', 'Part-time', 20],
  ['SIZ', 'Zero hour', 7],
  ['Academic', 'Fulltime', 100],
  ['Academic', 'Part-time', 35],
  ['Academic', 'Zero hour', 0],
];

const rowNumbers = Array.from({ length: 32 }, (_, i) => i + 1);

const chartPicks = [
  <MiniBars key="a" colors={[BLUE, '#7f7f7f', TAN]} heights={[9, 13, 6, 14]} />,
  <HierarchyIcon key="b" />,
  <StepIcon key="c" />,
  <LineMiniIcon key="d" />,
  <MiniBars key="e" colors={[BLUE]} heights={[7, 12, 15, 10]} />,
  <ComboMiniIcon key="f" />,
  <PieMiniIcon key="g" />,
  <ScatterMiniIcon key="h" />,
];

export default function App() {
  return (
    <Screen>
      <GlobalStyle />
      <Window>
        <TitleBar>
          <QuickIcon $w={29}><SaveIcon /></QuickIcon>
          <QuickIcon $w={22}><UndoIcon /></QuickIcon>
          <QuickIcon $w={13}><Caret $light /></QuickIcon>
          <QuickIcon $w={22}><UndoIcon dim /></QuickIcon>
          <QuickIcon $w={12}><Caret $light $dim /></QuickIcon>
          <QuickIcon $w={36}><FormIcon /></QuickIcon>
          <QuickIcon $w={12}><CustomizeIcon /></QuickIcon>
          <DocTitle>ChartExamples  -  Excel</DocTitle>
        </TitleBar>

        <TabRow>
          {tabs.map(([label, w, active]) => (
            <Tab key={label} $w={w} $active={active}>{label}</Tab>
          ))}
          <TellMe>
            <Lightbulb size={16} strokeWidth={1.2} color="#fff" />
            Tell me what you want to do
          </TellMe>
        </TabRow>

        <Ribbon>
          <Group $w={197}>
            <GroupBody>
              <BigButton $w={68}>
                <BigIcon><PivotTableIcon /></BigIcon>
                <BigLabel>PivotTable</BigLabel>
              </BigButton>
              <BigButton $w={77}>
                <BigIcon><RecPivotIcon /></BigIcon>
                <BigLabel>{'Recommended\nPivotTables'}</BigLabel>
              </BigButton>
              <BigButton $w={51}>
                <BigIcon><TableIcon /></BigIcon>
                <BigLabel>Table</BigLabel>
              </BigButton>
            </GroupBody>
            <GroupLabel>Tables</GroupLabel>
          </Group>

          <Group $w={285}>
            <GroupBody>
              <BigButton $w={54}>
                <BigIcon><PicturesIcon /></BigIcon>
                <BigLabel>Pictures</BigLabel>
              </BigButton>
              <BigButton $w={42}>
                <BigIcon><OnlinePicturesIcon /></BigIcon>
                <BigLabel>{'Online\nPictures'}</BigLabel>
              </BigButton>
              <BigButton $w={44}>
                <BigIcon><ShapesIcon /></BigIcon>
                <BigLabel>Shapes</BigLabel>
                <BigCaret><Caret /></BigCaret>
              </BigButton>
              <BigButton $w={42}>
                <BigIcon><IconsIcon /></BigIcon>
                <BigLabel>Icons</BigLabel>
              </BigButton>
              <SmallColumn $w={102} $top={-2} $left={3}>
                <SmallRow $h={23.5}>
                  <SmallIcon><ModelsIcon /></SmallIcon>3D Models&nbsp;&nbsp;&nbsp;<Caret />
                </SmallRow>
                <SmallRow $h={23.5}>
                  <SmallIcon><SmartArtIcon /></SmallIcon>SmartArt
                </SmallRow>
                <SmallRow $h={23.5}>
                  <SmallIcon><ScreenshotIcon /></SmallIcon>Screenshot&nbsp;<Caret />
                </SmallRow>
              </SmallColumn>
            </GroupBody>
            <GroupLabel>Illustrations</GroupLabel>
          </Group>

          <Group $w={197}>
            <GroupBody>
              <SmallColumn $w={108} $top={2} $left={7}>
                <SmallRow $h={31}>
                  <SmallIcon><GetAddinsIcon /></SmallIcon>Get Add-ins
                </SmallRow>
                <SmallRow $h={31}>
                  <SmallIcon><MyAddinsIcon /></SmallIcon>My Add-ins&nbsp;&nbsp;&nbsp;&nbsp;<Caret />
                </SmallRow>
              </SmallColumn>
              <BigButton $w={42}>
                <BigIcon><BingIcon /></BigIcon>
                <BigLabel>{'Bing\nMaps'}</BigLabel>
              </BigButton>
              <BigButton $w={43}>
                <BigIcon><PeopleIcon /></BigIcon>
                <BigLabel>{'People\nGraph'}</BigLabel>
              </BigButton>
            </GroupBody>
            <GroupLabel>Add-ins</GroupLabel>
          </Group>

          <Group $w={297}>
            <GroupBody>
              <BigButton $w={94}>
                <BigIcon><RecChartsIcon /></BigIcon>
                <BigLabel>{'Recommended\nCharts'}</BigLabel>
              </BigButton>
              <ChartGrid>
                {chartPicks.map(icon => (
                  <ChartPick key={icon.key}>
                    {icon}
                    <Caret />
                  </ChartPick>
                ))}
              </ChartGrid>
              <BigButton $w={40}>
                <BigIcon><GlobeIcon /></BigIcon>
                <BigLabel>Maps</BigLabel>
                <BigCaret><Caret /></BigCaret>
              </BigButton>
              <BigButton $w={60}>
                <BigIcon><PivotChartIcon /></BigIcon>
                <BigLabel>PivotChart</BigLabel>
                <BigCaret><Caret /></BigCaret>
              </BigButton>
            </GroupBody>
            <GroupLabel $pr={16}>
              Charts
              <Launcher />
            </GroupLabel>
          </Group>

          <Group $w={48}>
            <GroupBody>
              <BigButton $w={48}>
                <BigIcon><ThreeDMapIcon /></BigIcon>
                <BigLabel>3D</BigLabel>
                <BigLabel>Map <Caret /></BigLabel>
              </BigButton>
            </GroupBody>
            <GroupLabel>Tours</GroupLabel>
          </Group>
        </Ribbon>

        <FormulaRow>
          <NameBox>A1<Caret /></NameBox>
          <Dots>⋮</Dots>
          <FxBox>
            <FormulaCancel />
            <FormulaOk />
            <FxMark>fx</FxMark>
          </FxBox>
          <FormulaInput>Department</FormulaInput>
        </FormulaRow>

        <Sheet>
          <Corner />
          {columns.map((c, i) => (
            <ColHead key={c} $on={i < 3}>{c}</ColHead>
          ))}
          {rowNumbers.map(n => {
            const data = n >= 2 && n <= 13 ? rows[n - 2] : null;
            return (
              <Fragment key={n}>
                <RowHead $on={n <= 13}>{n}</RowHead>
                {columns.map((c, i) => {
                  if (n === 1 && i === 0) return <Cell key={c} $bold>Department</Cell>;
                  if (n === 1 && i === 1) return <Cell key={c} $on $bold>Contract</Cell>;
                  if (n === 1 && i === 2) return <Cell key={c} $on $bold $spill>Headcount</Cell>;
                  if (data && i < 3) {
                    return <Cell key={c} $on $right={i === 2}>{data[i]}</Cell>;
                  }
                  return <Cell key={c} />;
                })}
              </Fragment>
            );
          })}
        </Sheet>
      </Window>

      <SelectionBox />
      <FillHandle />

      <Dialog>
        <DialogTitle>
          <DialogTitleText>Insert Chart</DialogTitleText>
          <TitleGlyph>?</TitleGlyph>
          <TitleGlyph>
            <svg width="11" height="11" viewBox="0 0 11 11" fill="none" stroke="#1a1a1a">
              <path d="M0.500 0.500l10 10M10.500 0.500l-10 10" />
            </svg>
          </TitleGlyph>
        </DialogTitle>
        <DialogTabs>
          <DialogTab $w={122}>Recommended Charts</DialogTab>
          <DialogTab $w={66} $active>All Charts</DialogTab>
        </DialogTabs>
        <Panel>
          <TypeList>
            <TypeStack>
              {chartTypes.map(name => (
                <TypeItem key={name} $on={name === 'Sunburst'}>
                  <svg width="16" height="16" viewBox="0 0 16 16">{typeIcons[name]}</svg>
                  {name}
                </TypeItem>
              ))}
            </TypeStack>
          </TypeList>
          <Gallery>
            <Thumb><SunburstThumb /></Thumb>
            <Rule />
            <GalleryTitle>Sunburst</GalleryTitle>
            <Preview>
              <PreviewPaper><Sunburst /></PreviewPaper>
            </Preview>
          </Gallery>
        </Panel>
        <DialogFooter>
          <DialogButton $primary>OK</DialogButton>
          <DialogButton>Cancel</DialogButton>
          <Grip>
            <svg width="9" height="9" viewBox="0 0 9 9" fill="#b5b5b5">
              <path d="M6 0h2v2H6zM3 3h2v2H3zM6 3h2v2H6zM0 6h2v2H0zM3 6h2v2H3zM6 6h2v2H6z" />
            </svg>
          </Grip>
        </DialogFooter>
      </Dialog>

      <Pointer width="14" height="21" viewBox="0 0 14 21">
        <path d="M1 1v16l4-3.500 3 6 2.500-1.200-3-6H13z" fill="#fff" stroke="#111" strokeWidth="1" />
      </Pointer>

      <RedBox $x={126} $y={33} $w={51} $h={35} />
      <RedBox $x={14} $y={203} $w={228} $h={306} />
      <RedBox $x={675} $y={57} $w={99} $h={100} />
      <RedBox $x={472} $y={274} $w={69} $h={30} />
      <RedBox $x={357} $y={621} $w={127} $h={30} />
      <RedBox $x={500} $y={399} $w={293} $h={179} />

      <Badge $x={239} $y={508}>1</Badge>
      <Badge $x={766} $y={155}>2</Badge>
      <Badge $x={545} $y={300}>3</Badge>
      <Badge $x={489} $y={650}>4</Badge>
      <Badge $x={794} $y={576}>5</Badge>
    </Screen>
  );
}
